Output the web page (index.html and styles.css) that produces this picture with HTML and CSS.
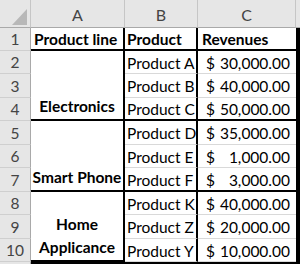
FILE: index.html
```html
<!DOCTYPE html>
<html>
<head>
<meta charset="utf-8">
<link rel="stylesheet" href="styles.css">
</head>
<body>
<div class="sheet">
  <div class="corner"><span class="tri"></span></div>
  <div class="colhead">A</div>
  <div class="colhead">B</div>
  <div class="colhead">C</div>
  <div class="colhead colhead-end"></div>

  <div class="rowhead r1">1</div>
  <div class="cell a hdr thick-b">Product line</div>
  <div class="cell b hdr thick-b">Product</div>
  <div class="cell c hdr thick-b">Revenues</div>

  <div class="rowhead r2">2</div>
  <div class="rowhead r3">3</div>
  <div class="rowhead r4">4</div>
  <div class="rowhead r5">5</div>
  <div class="rowhead r6">6</div>
  <div class="rowhead r7">7</div>
  <div class="rowhead r8">8</div>
  <div class="rowhead r9">9</div>
  <div class="rowhead r10">10</div>
  <div class="rowhead r11"></div>

  <div class="cell a merged g1">Electronics</div>
  <div class="cell a merged g2">Smart Phone</div>
  <div class="cell a merged g3">Home Applicance</div>

  <div class="cell b r2">Product A</div><div class="cell c r2"><span>$</span><span>30,000.00</span></div>
  <div class="cell b r3">Product B</div><div class="cell c r3"><span>$</span><span>40,000.00</span></div>
  <div class="cell b r4 thick-b">Product C</div><div class="cell c r4 thick-b"><span>$</span><span>50,000.00</span></div>
  <div class="cell b r5">Product D</div><div class="cell c r5"><span>$</span><span>35,000.00</span></div>
  <div class="cell b r6">Product E</div><div class="cell c r6"><span>$</span><span>1,000.00</span></div>
  <div class="cell b r7 thick-b">Product F</div><div class="cell c r7 thick-b"><span>$</span><span>3,000.00</span></div>
  <div class="cell b r8">Product K</div><div class="cell c r8"><span>$</span><span>40,000.00</span></div>
  <div class="cell b r9">Product Z</div><div class="cell c r9"><span>$</span><span>20,000.00</span></div>
  <div class="cell b r10">Product Y</div><div class="cell c r10"><span>$</span><span>10,000.00</span></div>

  <div class="edge-right"></div>
  <div class="edge-bottom"></div>
</div>
</body>
</html>
```

FILE: styles.css
```css
html, body {
  margin: 0;
  padding: 0;
  background: #ffffff;
}
body {
  width: 300px;
  height: 264px;
  overflow: hidden;
  font-family: Lato, "Liberation Sans", sans-serif;
  color: #000;
}
.sheet {
  display: grid;
  grid-template-columns: 31px 94px 73px 98px 4px;
  grid-template-rows: 28px 23px 23px 24px 23px 24px 23px 24px 23px 24px 23px 2px;
  width: 300px;
  height: 264px;
}
.corner {
  grid-column: 1;
  grid-row: 1;
  background: #e6e6e6;
  border-right: 1px solid #c6c6c6;
  border-bottom: 1px solid #a9a9a9;
  box-sizing: border-box;
  position: relative;
}
.tri {
  position: absolute;
  right: 3px;
  bottom: 2px;
  width: 0;
  height: 0;
  border-left: 15px solid transparent;
  border-bottom: 16px solid #b8b8b8;
}
.colhead {
  grid-row: 1;
  background: #e6e6e6;
  border-right: 1px solid #c6c6c6;
  border-bottom: 1px solid #a9a9a9;
  box-sizing: border-box;
  display: flex;
  align-items: flex-end;
  justify-content: center;
  padding-bottom: 3px;
  font-size: 16px;
  line-height: 18px;
  color: #444;
}
.colhead-end {
  border-right: none;
}
.rowhead {
  grid-column: 1;
  background: #e6e6e6;
  border-right: 1px solid #a9a9a9;
  border-bottom: 1px solid #cfcfcf;
  box-sizing: border-box;
  display: flex;
  align-items: center;
  justify-content: center;
  font-size: 15.5px;
  color: #444;
}
.r1 { grid-row: 2; }
.r2 { grid-row: 3; }
.r3 { grid-row: 4; }
.r4 { grid-row: 5; }
.r5 { grid-row: 6; }
.r6 { grid-row: 7; }
.r7 { grid-row: 8; }
.r8 { grid-row: 9; }
.r9 { grid-row: 10; }
.r10 { grid-row: 11; }
.r11 { grid-row: 12; border-bottom: none; }

.cell {
  box-sizing: border-box;
  display: flex;
  align-items: center;
  font-size: 15.5px;
  line-height: 18px;
  padding-top: 1px;
  white-space: nowrap;
  border-bottom: 1px solid #d9d9d9;
  border-right: 1px solid #d9d9d9;
}
.hdr {
  grid-row: 2;
  font-weight: 700;
}
.a {
  grid-column: 2;
  padding-left: 3px;
  border-right: 2px solid #000;
}
.b {
  grid-column: 3;
  padding-left: 2px;
  border-right: 2px solid #000;
}
.c {
  grid-column: 4;
  border-right: none;
  justify-content: space-between;
  padding-left: 8px;
  padding-right: 6px;
}
.c.hdr {
  justify-content: flex-start;
  padding-left: 4px;
}
.thick-b {
  border-bottom: 2px solid #000;
}
.merged {
  font-weight: 700;
  justify-content: center;
  align-items: flex-end;
  text-align: center;
  white-space: normal;
  padding: 0 0 1px 0;
  line-height: 23px;
  border-bottom: 2px solid #000;
}
.g1 { grid-row: 3 / span 3; }
.g2 { grid-row: 6 / span 3; }
.g3 { grid-row: 9 / span 3; padding-left: 8px; padding-right: 8px; }

.edge-right {
  grid-column: 5;
  grid-row: 2 / span 11;
  background: #000;
}
.edge-bottom {
  grid-column: 2 / span 4;
  grid-row: 12;
  background: #000;
}
```
